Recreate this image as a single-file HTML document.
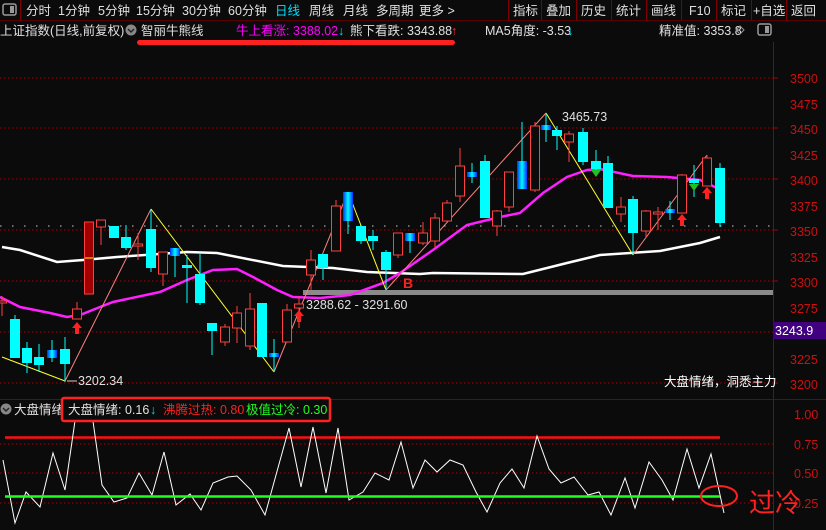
<!DOCTYPE html>
<html><head><meta charset="utf-8"><style>
*{margin:0;padding:0;box-sizing:border-box}
body{width:826px;height:530px;background:#0b0b0b;overflow:hidden;font-family:"Liberation Sans","Noto Sans CJK SC",sans-serif;position:relative;color:#ddd}
</style></head><body>
<svg width="826" height="530" style="position:absolute;left:0;top:0" font-family="Liberation Sans, Noto Sans CJK SC, sans-serif">
<defs><linearGradient id="bg" x1="0" x2="1"><stop offset="0" stop-color="#0030ff"/><stop offset=".5" stop-color="#00ffff"/><stop offset="1" stop-color="#0030ff"/></linearGradient></defs>
<rect x="0" y="0" width="826" height="20" fill="#0b0b0b"/>
<line x1="0" y1="20.5" x2="826" y2="20.5" stroke="#5a0000"/>
<line x1="20.5" y1="0" x2="20.5" y2="20" stroke="#800000"/>
<rect x="3" y="4" width="13" height="11" rx="2" fill="none" stroke="#999" stroke-width="1.5"/><rect x="10" y="6" width="4" height="7" fill="#999"/>
<g stroke="#800000"><line x1="508.5" y1="0" x2="508.5" y2="20"/><line x1="541.5" y1="0" x2="541.5" y2="20"/><line x1="576.5" y1="0" x2="576.5" y2="20"/><line x1="611.5" y1="0" x2="611.5" y2="20"/><line x1="646.5" y1="0" x2="646.5" y2="20"/><line x1="681.5" y1="0" x2="681.5" y2="20"/><line x1="716.5" y1="0" x2="716.5" y2="20"/><line x1="751.5" y1="0" x2="751.5" y2="20"/><line x1="786.5" y1="0" x2="786.5" y2="20"/></g>
<g font-size="12.5" fill="#e0e0e0">
<text x="26" y="15">分时</text><text x="58" y="15">1分钟</text><text x="98" y="15">5分钟</text><text x="136" y="15">15分钟</text><text x="182" y="15">30分钟</text><text x="228" y="15">60分钟</text><text x="275" y="15" fill="#00e0ff">日线</text><text x="309" y="15">周线</text><text x="343" y="15">月线</text><text x="376" y="15">多周期</text><text x="419" y="15">更多 &gt;</text>
<text x="513" y="15">指标</text><text x="546" y="15">叠加</text><text x="581" y="15">历史</text><text x="616" y="15">统计</text><text x="651" y="15">画线</text><text x="689" y="15">F10</text><text x="721" y="15">标记</text><text x="753" y="15">+自选</text><text x="791" y="15">返回</text>
</g>
<g font-size="12.5">
<text x="0" y="35" fill="#e0e0e0">上证指数(日线,前复权)</text>
<circle cx="131" cy="30" r="5.5" fill="#888"/><path d="M128 29l3 3 3-3" stroke="#222" stroke-width="1.4" fill="none"/>
<text x="141" y="35" fill="#e0e0e0">智丽牛熊线</text>
<text x="236" y="35" fill="#ff00ff">牛上看涨: 3388.02</text><text x="338" y="35" fill="#00e0ff">↓</text>
<text x="350" y="35" fill="#e0e0e0">熊下看跌: 3343.88</text><text x="451" y="35" fill="#ff3030">↑</text>
<text x="485" y="35" fill="#e0e0e0">MA5角度: -3.53</text><text x="567" y="35" fill="#00e0ff">↓</text>
<text x="659" y="35" fill="#e0e0e0">精准值: 3353.8</text>
</g>
<path d="M740 26l4 4-4 4-4-4z" fill="none" stroke="#999"/>
<rect x="758" y="24" width="13" height="11" rx="2" fill="none" stroke="#999" stroke-width="1.5"/><rect x="765" y="26" width="4" height="7" fill="#999"/>
<rect x="137" y="40" width="318" height="5" rx="2.5" fill="#ff2020"/>
<line x1="773.5" y1="42" x2="773.5" y2="530" stroke="#900000"/>
<line x1="0" y1="399.5" x2="826" y2="399.5" stroke="#800000"/>
<g stroke="#a00000" stroke-dasharray="1.5 2.5">
<line x1="0" y1="78" x2="773" y2="78"/><line x1="0" y1="128" x2="773" y2="128"/><line x1="0" y1="179" x2="773" y2="179"/><line x1="0" y1="230" x2="773" y2="230"/><line x1="0" y1="281" x2="773" y2="281"/><line x1="0" y1="332" x2="773" y2="332"/><line x1="0" y1="383" x2="773" y2="383"/>
<line x1="0" y1="444" x2="773" y2="444"/><line x1="0" y1="473" x2="773" y2="473"/><line x1="0" y1="503" x2="773" y2="503"/>
</g>
<line x1="0" y1="226" x2="773" y2="226" stroke="#ccc" stroke-dasharray="1.5 10.5"/>
<g fill="#cc1010" font-size="12.5">
<text x="790" y="83">3500</text><text x="790" y="109">3475</text><text x="790" y="134">3450</text><text x="790" y="160">3425</text><text x="790" y="185">3400</text><text x="790" y="211">3375</text><text x="790" y="236">3350</text><text x="790" y="262">3325</text><text x="790" y="287">3300</text><text x="790" y="313">3275</text><text x="790" y="364">3225</text><text x="790" y="389">3200</text>
<text x="794" y="419">1.00</text><text x="794" y="449">0.75</text><text x="794" y="478">0.50</text><text x="794" y="508">0.25</text>
</g>
<g stroke="#a00000"><line x1="773" y1="78" x2="778" y2="78"/><line x1="773" y1="128" x2="778" y2="128"/><line x1="773" y1="179" x2="778" y2="179"/><line x1="773" y1="230" x2="778" y2="230"/><line x1="773" y1="281" x2="778" y2="281"/><line x1="773" y1="332" x2="778" y2="332"/><line x1="773" y1="383" x2="778" y2="383"/></g>
<rect x="773" y="322" width="53" height="17" fill="#400080"/><text x="775" y="335" font-size="12.5" fill="#fff">3243.9</text>
<rect x="303" y="290" width="470" height="5" fill="#8a8a8a"/>
<polyline fill="none" stroke="#fff" stroke-width="2.5" points="2,247 20,250 57,262 83,260 117,257 187,252 217,253 283,266 333,268 367,272 420,274 433,273 523,274 567,263 600,255 660,251 700,243 720,237"/>
<polyline fill="none" stroke="#ff20ff" stroke-width="2.5" points="0,297 20,307 50,313 67,317 80,315 100,307 113,302 160,292 187,280 213,270 237,269 253,277 277,290 293,297 320,298 350,295 383,283 400,273 433,250 467,225 500,217 520,213 543,193 567,177 587,170 600,169 633,176 667,177 700,180 717,188"/>
<g fill="none" stroke-width="1">
<polyline stroke="#ffff30" points="2,357 65,381"/>
<polyline stroke="#ff8080" points="65,381 151,209"/>
<polyline stroke="#ffff30" points="151,209 274,372"/>
<polyline stroke="#ff8080" points="274,372 348,192"/>
<polyline stroke="#ffff30" points="348,192 386,290"/>
<polyline stroke="#ff8080" points="386,290 546,113"/>
<polyline stroke="#ffff30" points="546,113 633,255"/>
<polyline stroke="#ff8080" points="633,255 707,155"/>
</g>
<g id="c" stroke-width="1"></g>
<g font-size="12.5" fill="#e0e0e0">
<text x="78" y="385">3202.34</text><path d="M67 381h10" stroke="#ccc"/>
<text x="306" y="309">3288.62 - 3291.60</text>
<text x="562" y="121">3465.73</text>
</g>
<text x="403" y="288" fill="#ff2020" font-size="14" font-weight="bold">B</text>
<text x="664" y="386" font-size="12.5" fill="#fff">大盘情绪，洞悉主力</text>
<line x1="5" y1="437.5" x2="720" y2="437.5" stroke="#ff1010" stroke-width="2.5"/>
<polyline fill="none" stroke="#fff" stroke-width="1" points="3,460 15,523 26,492 40,507 53,453 65,490 78,400 90,400 102,485 114,502 127,498 139,473 152,495 164,452 176,505 190,494 201,510 213,483 228,477 237,476 251,490 265,515 276,475 289,428 301,487 313,427 326,493 338,428 349,500 363,492 375,473 389,480 401,442 413,488 425,460 437,472 450,460 463,465 476,492 487,512 500,483 512,469 524,488 537,436 549,469 561,483 574,477 588,495 599,492 611,515 625,478 635,508 649,462 662,480 673,500 687,449 699,488 711,454 724,513"/>
<line x1="5" y1="496.5" x2="720" y2="496.5" stroke="#20ff20" stroke-width="2.5"/>
<ellipse cx="719" cy="496" rx="18" ry="10" fill="none" stroke="#ff2020" stroke-width="2"/>
<text x="749" y="512" font-size="26" fill="#ff2020">过冷</text>
<rect x="0" y="401" width="62" height="18" fill="#0b0b0b"/>
<circle cx="6" cy="409" r="5.5" fill="#888"/><path d="M3 408l3 3 3-3" stroke="#222" stroke-width="1.4" fill="none"/>
<text x="14" y="414" font-size="12.5" fill="#e0e0e0">大盘情绪</text>
<rect x="62" y="398" width="268" height="23" fill="#0b0b0b" stroke="#ff2020" stroke-width="2.5" rx="2"/>
<g font-size="12.5"><text x="68" y="414" fill="#e0e0e0">大盘情绪: 0.16</text><text x="150" y="414" fill="#00e0ff">↓</text><text x="163" y="414" fill="#ff2020">沸腾过热: 0.80</text><text x="246" y="414" fill="#20ff20">极值过冷: 0.30</text></g>
</svg>
<script>
var d=[["r",2,301,303,296,316],["c",15,319,358,315,358],["c",27,348,363,342,373],["c",39,357,365,344,372],["b",52,350,358,340,362],["c",65,349,364,337,382],["r",77,309,319,302,319],["f",89,222,294,222,294],["r",101,220,227,220,245],["c",114,226,238,226,238],["c",126,237,248,225,250],["r",138,244,246,233,260],["c",151,229,268,210,272],["r",163,252,274,252,286],["b",175,248,256,248,277],["c",187,265,268,255,303],["c",200,274,303,253,305],["c",212,323,331,323,355],["r",225,327,342,324,346],["r",237,313,328,306,343],["r",250,309,346,293,350],["c",262,303,357,303,357],["b",274,353,357,339,372],["r",287,310,342,304,342],["r",299,304,308,296,328],["r",311,260,275,250,290],["c",323,254,268,254,280],["r",336,206,251,200,251],["b",348,192,221,192,234],["c",361,226,241,226,244],["c",373,236,241,230,250],["c",386,252,270,250,290],["r",398,233,255,233,258],["b",410,233,241,233,253],["r",423,233,243,222,245],["r",435,218,241,213,248],["r",447,203,221,200,222],["r",460,166,196,148,202],["b",472,172,177,163,183],["c",485,161,218,155,218],["r",497,211,226,210,236],["r",509,172,207,172,212],["b",522,161,189,122,189],["r",535,126,190,122,192],["b",546,125,130,113,142],["c",557,130,136,126,150],["r",569,134,142,131,162],["c",583,132,162,128,165],["c",596,161,169,150,175],["c",608,163,208,156,208],["r",621,207,214,197,222],["c",633,199,233,196,255],["r",646,211,231,210,238],["r",658,212,214,207,230],["b",670,209,213,201,220],["r",682,175,213,174,213],["c",694,179,183,165,197],["r",707,158,186,155,186],["c",720,168,223,163,227]];
var s="";
d.forEach(function(a){var t=a[0],x=a[1],o=a[2],c=a[3],h=a[4],l=a[5];var col=t=="r"||t=="f"?"#ff4040":"#00ffff";
s+='<line x1="'+x+'" y1="'+h+'" x2="'+x+'" y2="'+l+'" stroke="'+col+'"/>';
var hh=Math.max(c-o,1.5);
if(t=="r")s+='<rect x="'+(x-4.5)+'" y="'+o+'" width="9" height="'+hh+'" fill="#0b0b0b" stroke="#ff4040"/>';
else if(t=="f")s+='<rect x="'+(x-4.5)+'" y="'+o+'" width="9" height="'+hh+'" fill="#a00000" stroke="#ff4040"/><line x1="'+(x-4)+'" y1="258" x2="'+(x+4)+'" y2="258" stroke="#ffff00"/>';
else if(t=="b")s+='<rect x="'+(x-5)+'" y="'+o+'" width="10" height="'+hh+'" fill="url(#bg)"/>';
else s+='<rect x="'+(x-5)+'" y="'+o+'" width="10" height="'+hh+'" fill="#00ffff"/>';});
[[77,322],[299,310],[682,214],[707,187]].forEach(function(p){s+='<path d="M'+p[0]+' '+p[1]+'l-5 6h3v6h4v-6h3z" fill="#ff2020"/>';});
[[596,170],[694,184]].forEach(function(p){s+='<path d="M'+(p[0]-5)+' '+p[1]+'h10l-5 7z" fill="#20c020"/>';});
document.getElementById("c").innerHTML=s;
</script>
</body></html>
